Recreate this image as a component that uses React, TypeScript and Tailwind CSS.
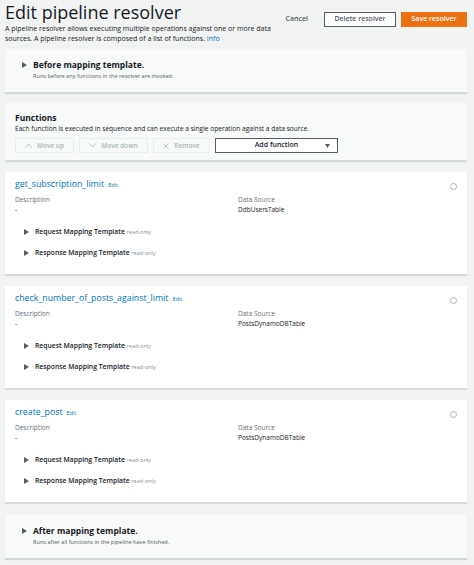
import React from "react";

const font = { fontFamily: '"Open Sans", "Noto Sans", Arial, sans-serif' };

function Caret() {
  return (
    <svg width="5" height="6" viewBox="0 0 5 6" className="shrink-0">
      <path d="M0 0 L5 3 L0 6 Z" fill="#545b64" />
    </svg>
  );
}

function TemplatePanel({ title, sub }: { title: string; sub: string }) {
  return (
    <div className="flex h-[44px] items-start gap-[6px] border-b border-[#d5dbdb] bg-[#f8f9f9] pl-[17px] pt-[9px] shadow-[0_1px_1px_rgba(0,0,0,0.12)]">
      <div className="pt-[4px]">
        <Caret />
      </div>
      <div>
        <div className="text-[8.5px] font-bold leading-[13px] text-[#16191f]">{title}</div>
        <div className="mt-[1px] text-[5.6px] leading-[9px] text-[#545b64]">{sub}</div>
      </div>
    </div>
  );
}

function Mapping({ label }: { label: string }) {
  return (
    <div className="flex items-center gap-[6px] pl-[9px]">
      <Caret />
      <span className="text-[6.8px] font-semibold text-[#16191f]">
        {label} <span className="text-[5.5px] font-normal text-[#879196]">read-only</span>
      </span>
    </div>
  );
}

function FunctionCard({ name, source }: { name: string; source: string }) {
  return (
    <div className="relative h-[103px] border-b border-[#d5dbdb] bg-white px-[10px] pt-[6px] shadow-[0_1px_1px_rgba(0,0,0,0.1)]">
      <div className="absolute right-[10px] top-[11px] h-[7px] w-[7px] rounded-full border border-[#aab7b8] bg-white" />
      <div className="flex items-baseline gap-[4px]">
        <span className="text-[8.8px] leading-[13px] text-[#0073bb]">{name}</span>
        <span className="text-[5.5px] text-[#0073bb]">Edit</span>
      </div>
      <div className="mt-[4px] grid grid-cols-2">
        <div>
          <div className="text-[6.5px] leading-[10px] text-[#687078]">Description</div>
          <div className="text-[6.5px] leading-[10px] text-[#16191f]">-</div>
        </div>
        <div className="pl-[2px]">
          <div className="text-[6.5px] leading-[10px] text-[#687078]">Data Source</div>
          <div className="text-[6.5px] leading-[10px] text-[#16191f]">{source}</div>
        </div>
      </div>
      <div className="mt-[12px] flex flex-col gap-[11px]">
        <Mapping label="Request Mapping Template" />
        <Mapping label="Response Mapping Template" />
      </div>
    </div>
  );
}

function ToolButton({ icon, label, w }: { icon: React.ReactNode; label: string; w: string }) {
  return (
    <div
      className={`flex h-[15px] items-center justify-center gap-[5px] border border-[#eaeded] bg-[#f8f9f9] text-[6.5px] font-semibold text-[#aab7b8] ${w}`}
    >
      {icon}
      {label}
    </div>
  );
}

export default function App() {
  return (
    <div className="min-h-[565px] w-[474px] bg-[#f2f3f3] pb-[5px]" style={font}>
      <div className="pl-[5px] pr-[7px]">
        <div className="flex items-start justify-between">
          <div className="min-w-0 flex-1 pt-[1px]">
            <h1 className="text-[18px] leading-[22px] text-[#16191f]">Edit pipeline resolver</h1>
            <p className="mt-[1px] max-w-[272px] text-[7px] leading-[10px] text-[#16191f]">
              A pipeline resolver allows executing multiple operations against one or more data sources. A pipeline resolver is composed of a list of functions.{" "}
              <span className="text-[#0073bb]">Info</span>
            </p>
          </div>
          <div className="flex shrink-0 items-center pt-[12px]">
            <span className="mr-[16px] text-[7px] font-semibold text-[#545b64]">Cancel</span>
            <div className="flex h-[15px] w-[72px] items-center justify-center border border-[#545b64] bg-white text-[7px] font-semibold text-[#545b64]">
              Delete resolver
            </div>
            <div className="ml-[5px] flex h-[15px] w-[66px] items-center justify-center border border-[#ec7211] bg-[#ec7211] text-[7px] font-semibold text-white">
              Save resolver
            </div>
          </div>
        </div>

        <div className="mt-[5px]">
          <TemplatePanel title="Before mapping template." sub="Runs before any functions in the resolver are invoked." />
        </div>

        <div className="mt-[10px] h-[58px] border-b border-[#d5dbdb] bg-[#f8f9f9] px-[10px] pt-[9px] shadow-[0_1px_1px_rgba(0,0,0,0.12)]">
          <div className="text-[8.5px] font-bold leading-[12px] text-[#16191f]">Functions</div>
          <div className="text-[6.6px] leading-[10px] text-[#16191f]">
            Each function is executed in sequence and can execute a single operation against a data source.
          </div>
          <div className="mt-[4px] flex gap-[5px]">
            <ToolButton
              w="w-[59px]"
              label="Move up"
              icon={
                <svg width="7" height="5" viewBox="0 0 7 5">
                  <path d="M0.5 4.5 L3.5 1 L6.5 4.5" fill="none" stroke="#aab7b8" strokeWidth="0.8" />
                </svg>
              }
            />
            <ToolButton
              w="w-[69px]"
              label="Move down"
              icon={
                <svg width="7" height="5" viewBox="0 0 7 5">
                  <path d="M0.5 0.5 L3.5 4 L6.5 0.5" fill="none" stroke="#aab7b8" strokeWidth="0.8" />
                </svg>
              }
            />
            <ToolButton
              w="w-[57px]"
              label="Remove"
              icon={
                <svg width="6" height="6" viewBox="0 0 6 6">
                  <path d="M0.5 0.5 L5.5 5.5 M5.5 0.5 L0.5 5.5" fill="none" stroke="#aab7b8" strokeWidth="0.8" />
                </svg>
              }
            />
            <div className="relative flex h-[15px] w-[123px] items-center justify-center border border-[#545b64] bg-white text-[7px] font-semibold text-[#16191f]">
              Add function
              <svg width="5" height="4" viewBox="0 0 5 4" className="absolute right-[7px] top-[5px]">
                <path d="M0 0 L5 0 L2.5 4 Z" fill="#545b64" />
              </svg>
            </div>
          </div>
        </div>

        <div className="mt-[11px] flex flex-col gap-[11px]">
          <FunctionCard name="get_subscription_limit" source="DdbUsersTable" />
          <FunctionCard name="check_number_of_posts_against_limit" source="PostsDynamoDBTable" />
          <FunctionCard name="create_post" source="PostsDynamoDBTable" />
        </div>

        <div className="mt-[12px]">
          <TemplatePanel title="After mapping template." sub="Runs after all functions in the pipeline have finished." />
        </div>
      </div>
    </div>
  );
}
